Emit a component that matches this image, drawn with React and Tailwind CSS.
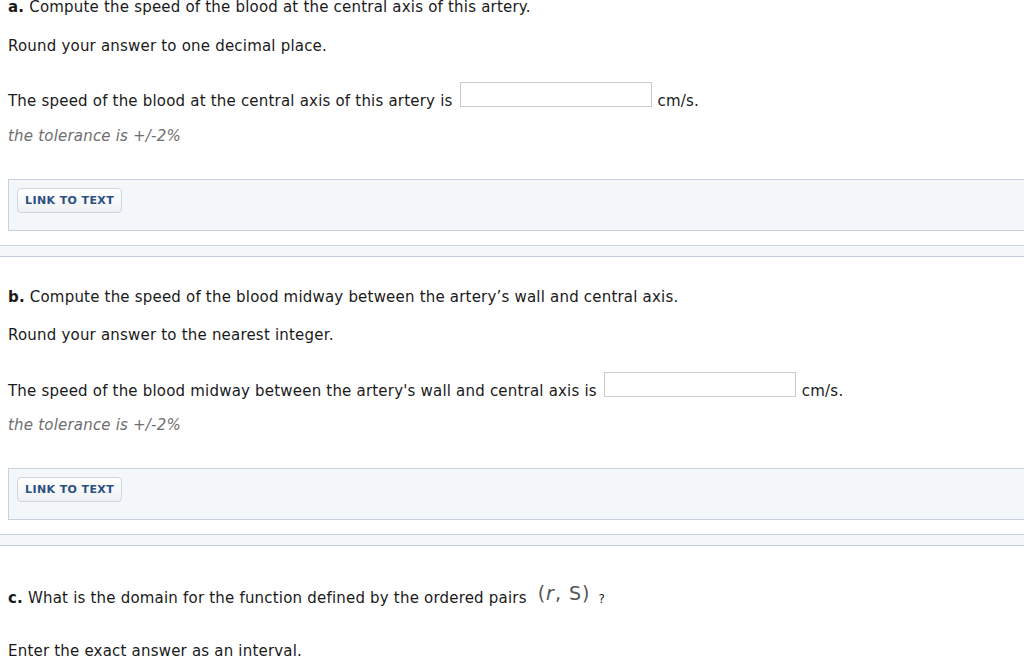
import React from 'react';

const font = { fontFamily: '"DejaVu Sans", Verdana, sans-serif' };

const AnswerRow = ({ text }) => (
  <div className="flex items-start h-[25px]">
    <span className="pt-[9px] leading-[20px] whitespace-nowrap">{text}</span>
    <input
      type="text"
      className="ml-[7px] w-[192px] h-[25px] border border-[#cccccc] bg-white outline-none"
    />
    <span className="pt-[9px] leading-[20px] ml-[6px]">cm/s.</span>
  </div>
);

const Tolerance = ({ className = '' }) => (
  <p className={`italic text-[#6e6e6e] leading-[20px] ${className}`}>the tolerance is +/-2%</p>
);

const LinkBox = ({ className = '' }) => (
  <div className={`ml-[8px] h-[52px] border border-[#c9d2dc] border-r-0 bg-[#f4f7fa] pl-[8px] pt-[8px] ${className}`}>
    <button className="h-[25px] px-[7px] rounded-[4px] border border-[#cfd6de] bg-gradient-to-b from-white to-[#eef1f4] text-[11px] font-bold tracking-[0.4px] text-[#2c4f82] leading-none">
      LINK TO TEXT
    </button>
  </div>
);

const Separator = ({ className = '' }) => (
  <div className={`h-[12px] border-t border-b border-t-[#cbd3dc] border-b-[#c3ccd6] bg-[#f4f7fa] ${className}`} />
);

export default function App() {
  return (
    <div className="w-[1024px] h-[661px] overflow-hidden bg-white text-[15px] tracking-[0.2px] text-[#1a1a1a]" style={font}>
      <div className="-mt-[3px]">
        <div className="px-[8px]">
          <p className="leading-[20px]"><b>a.</b> Compute the speed of the blood at the central axis of this artery.</p>
          <p className="leading-[20px] mt-[19px]">Round your answer to one decimal place.</p>
          <div className="mt-[26px]">
            <AnswerRow text="The speed of the blood at the central axis of this artery is" />
          </div>
          <Tolerance className="mt-[19px]" />
        </div>
        <LinkBox className="mt-[33px]" />
        <Separator className="mt-[14px]" />

        <div className="px-[8px]">
          <p className="leading-[20px] mt-[30px]"><b>b.</b> Compute the speed of the blood midway between the artery’s wall and central axis.</p>
          <p className="leading-[20px] mt-[18px]">Round your answer to the nearest integer.</p>
          <div className="mt-[27px]">
            <AnswerRow text="The speed of the blood midway between the artery's wall and central axis is" />
          </div>
          <Tolerance className="mt-[18px]" />
        </div>
        <LinkBox className="mt-[33px]" />
        <Separator className="mt-[14px]" />

        <div className="px-[8px]">
          <p className="leading-[20px] mt-[42px] flex items-end">
            <span><b>c.</b> What is the domain for the function defined by the ordered pairs</span>
            <span className="ml-[11px] text-[19px] leading-[20px] tracking-[1px] text-[#555] relative -top-[5px]">
              (<i>r</i>, S)
            </span>
            <span className="ml-[8px] text-[12px] leading-[18px]">?</span>
          </p>
          <p className="leading-[20px] mt-[33px]">Enter the exact answer as an interval.</p>
        </div>
      </div>
    </div>
  );
}
